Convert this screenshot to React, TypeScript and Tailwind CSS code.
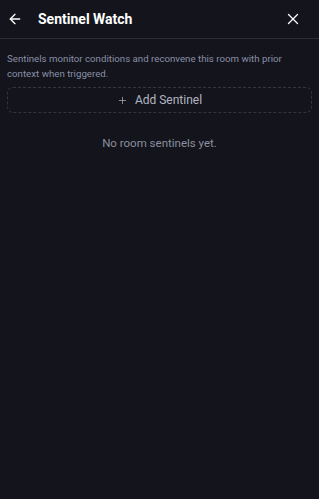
import { ArrowLeft, X, Plus } from "lucide-react";

export default function App() {
    return (
        <div className="w-[319px] h-[499px] bg-[#13141c] flex flex-col" style={{ fontFamily: "Roboto, 'Noto Sans', sans-serif" }}>
            <header className="h-[39px] flex items-center px-[7px] border-b border-[#2e2f36] shrink-0">
                <button className="w-[16px] h-[16px] flex items-center justify-center text-white">
                    <ArrowLeft size={16} strokeWidth={2} />
                </button>
                <h1 className="ml-[15px] text-[14px] font-bold text-white">Sentinel Watch</h1>
                <button className="ml-auto mr-[10px] text-white">
                    <X size={18} strokeWidth={1.75} />
                </button>
            </header>

            <section className="px-[7px] pt-[12px] flex flex-col">
                <p className="text-[9.7px] leading-[15px] text-[#8a8fa6]">
                    Sentinels monitor conditions and reconvene this room with prior context when triggered.
                </p>
                <button className="mt-[6px] h-[26px] w-full flex items-center justify-center gap-[7px] border border-dashed border-[#33353f] rounded-[6px] text-[12px] text-[#b3b6c2]">
                    <Plus size={11} strokeWidth={1.5} />
                    Add Sentinel
                </button>
                <p className="mt-[22px] text-center text-[11.5px] text-[#8b8f9e]">No room sentinels yet.</p>
            </section>
        </div>
    );
}
